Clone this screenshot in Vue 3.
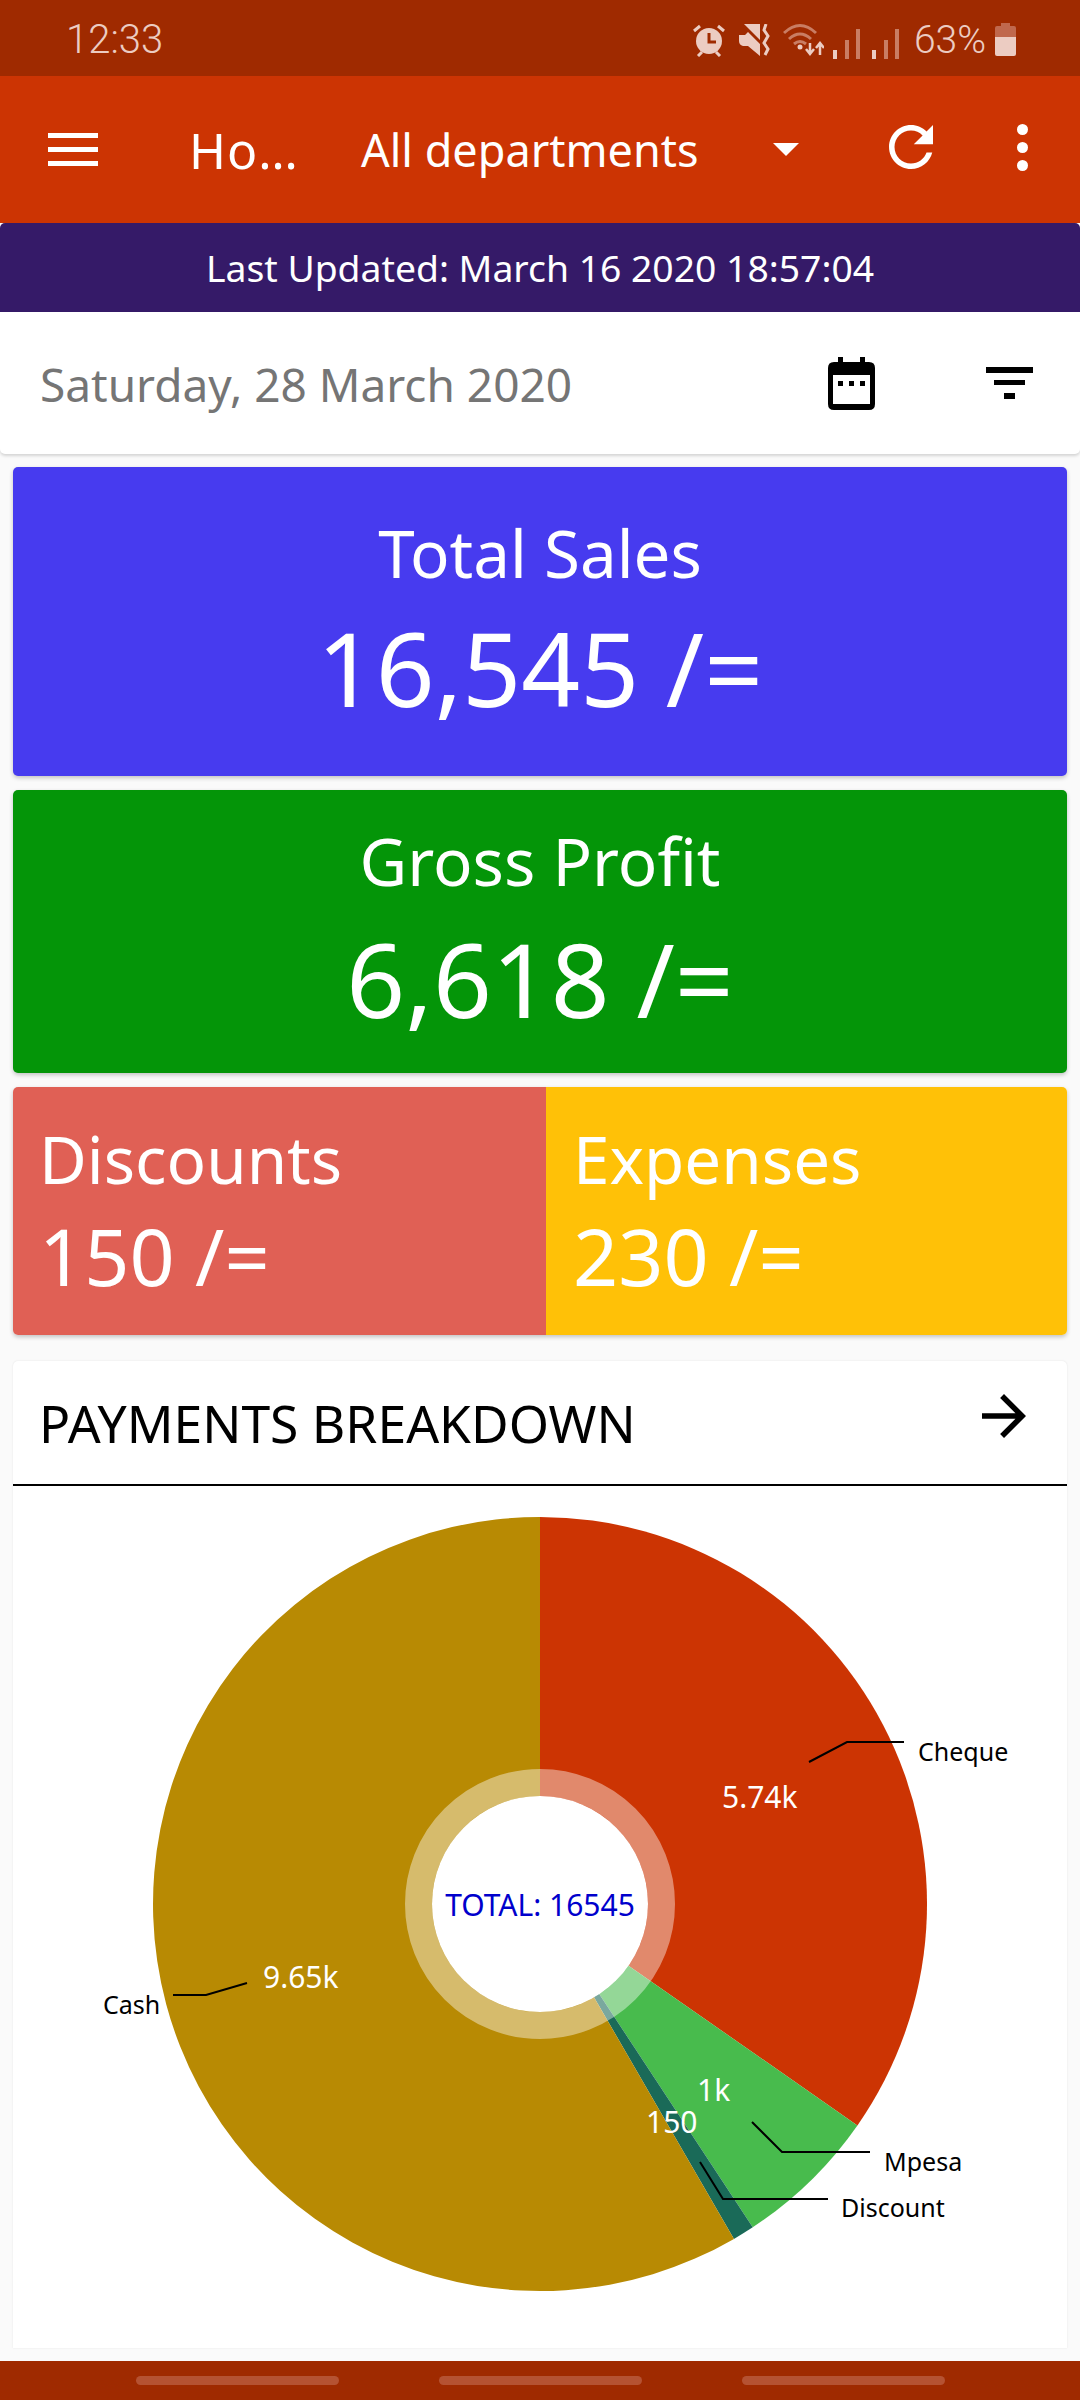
<script setup>
import { computed } from 'vue'

const cx = 540
const cy = 1904
const total = 16545

const pagos = [
  { nombre: 'Cheque', valor: 5740, color: '#cc3403' },
  { nombre: 'Mpesa', valor: 1000, color: '#48bb4d' },
  { nombre: 'Discount', valor: 150, color: '#1a6a58' },
  { nombre: 'Cash', valor: 9655, color: '#b88a03' }
]

const punto = (r, ang) => {
  const a = (ang * Math.PI) / 180
  return `${(cx + r * Math.sin(a)).toFixed(2)} ${(cy - r * Math.cos(a)).toFixed(2)}`
}

const arco = (r, ini, fin) => {
  const grande = fin - ini > 180 ? 1 : 0
  return `M${cx} ${cy}L${punto(r, ini)}A${r} ${r} 0 ${grande} 1 ${punto(r, fin)}Z`
}

const rebanadas = computed(() => {
  let ini = 0
  return pagos.map((p) => {
    const fin = ini + (p.valor / total) * 360
    const d = arco(387, ini, fin)
    ini = fin
    return { ...p, d }
  })
})

const lineas = [
  '809,1762 847,1742 904,1742',
  '752,2122 782,2152 870,2152',
  '700,2162 723,2199 828,2199',
  '173,1995 206,1995 247,1983'
]

const etiquetas = [
  { t: 'Cheque', x: 918, y: 1761 },
  { t: 'Mpesa', x: 884, y: 2171 },
  { t: 'Discount', x: 841, y: 2217 },
  { t: 'Cash', x: 103, y: 2014 }
]

const valores = [
  { t: '5.74k', x: 722, y: 1808 },
  { t: '1k', x: 697, y: 2101 },
  { t: '150', x: 646, y: 2133 },
  { t: '9.65k', x: 263, y: 1988 }
]
</script>

<template>
  <div class="pagina">
    <div class="status">
      <span class="hora">12:33</span>
      <div class="status-iconos">
        <svg width="36" height="34" viewBox="0 0 36 34" class="ic-status">
          <circle cx="18" cy="18" r="13" fill="#ecccc2" />
          <path d="M18 10v9h7" fill="none" stroke="#9f2a00" stroke-width="3" />
          <path d="M3 8l6-5M33 8l-6-5M7 33l4-4M29 33l-4-4" stroke="#ecccc2" stroke-width="3" />
        </svg>
        <svg width="32" height="32" viewBox="0 0 32 32" class="ic-status">
          <path d="M0 11h6l3-3 12 12v12L9 22H4q-4-1-4-5zM5 0l16 16V0z" fill="#ecccc2" />
          <path d="M27 0l-2 6 4 6-4 7 4 6-3 6" fill="none" stroke="#ecccc2" stroke-width="3" />
        </svg>
        <svg width="41" height="34" viewBox="0 0 41 34" class="ic-wifi">
          <path d="M1 10q16-15 32 0M6 16q11-10 22 0M11 21q6-5 12 0" fill="none" stroke="#c97d63" stroke-width="3" />
          <circle cx="17" cy="24" r="2.5" fill="#ecccc2" />
          <path d="M27 20v10M23 26l4 5 4-5M37 32V20M33 25l4-5 4 5" fill="none" stroke="#ecccc2" stroke-width="2.5" />
        </svg>
        <svg v-for="n in 2" :key="n" width="28" height="30" viewBox="0 0 28 30" class="ic-senal">
          <rect x="0" y="21" width="4" height="9" fill="#ecccc2" />
          <rect x="12" y="11" width="4" height="19" fill="#c97d63" />
          <rect x="23" y="0" width="4" height="30" fill="#c97d63" />
        </svg>
        <span class="porcentaje">63%</span>
        <svg width="21" height="33" viewBox="0 0 21 33" class="ic-bateria">
          <path d="M6 0h9v3h4q2 0 2 2v9H0V5q0-2 2-2h4z" fill="#c0684d" />
          <path d="M0 14h21v17q0 2-2 2H2q-2 0-2-2z" fill="#ecccc2" />
        </svg>
      </div>
    </div>

    <header class="barra">
      <div class="menu"><span></span><span></span><span></span></div>
      <div class="titulo">Ho…</div>
      <div class="departamento">All departments</div>
      <div class="triangulo"></div>
      <svg class="recargar" width="66" height="66" viewBox="0 0 24 24" fill="#fff">
        <path d="M17.65 6.35C16.2 4.9 14.21 4 12 4c-4.42 0-7.99 3.58-7.99 8s3.57 8 7.99 8c3.73 0 6.84-2.55 7.73-6h-2.08c-.82 2.33-3.04 4-5.65 4-3.31 0-6-2.69-6-6s2.69-6 6-6c1.66 0 3.14.69 4.22 1.78L13 11h7V4l-2.35 2.35z" />
      </svg>
      <div class="puntos"><span></span><span></span><span></span></div>
    </header>

    <div class="actualizado">Last Updated: March 16 2020 18:57:04</div>

    <div class="fecha">
      <span class="fecha-texto">Saturday, 28 March 2020</span>
      <svg class="calendario" width="47" height="53" viewBox="0 0 47 53">
        <path d="M10 0h5v5h17V0h5v5h4q6 0 6 6v36q0 6-6 6H6q-6 0-6-6V11q0-6 6-6h4zM5 18v29h37V18z" fill="#000" fill-rule="evenodd" />
        <rect x="10" y="24" width="5" height="5" fill="#000" />
        <rect x="21" y="24" width="5" height="5" fill="#000" />
        <rect x="32" y="24" width="5" height="5" fill="#000" />
      </svg>
      <svg class="filtro" width="47" height="32" viewBox="0 0 47 32">
        <rect x="0" y="0" width="47" height="6" />
        <rect x="8" y="13" width="31" height="5" />
        <rect x="18" y="26" width="11" height="6" />
      </svg>
    </div>

    <main class="contenido">
      <div class="tarjeta ventas">
        <div class="tarjeta-titulo">Total Sales</div>
        <div class="tarjeta-valor">16,545 /=</div>
      </div>

      <div class="tarjeta ganancia">
        <div class="tarjeta-titulo">Gross Profit</div>
        <div class="tarjeta-valor">6,618 /=</div>
      </div>

      <div class="doble">
        <div class="mitad descuentos">
          <div class="mitad-titulo">Discounts</div>
          <div class="mitad-valor">150 /=</div>
        </div>
        <div class="mitad gastos">
          <div class="mitad-titulo">Expenses</div>
          <div class="mitad-valor">230 /=</div>
        </div>
      </div>

      <section class="panel">
        <div class="panel-cabecera">
          <h2>PAYMENTS BREAKDOWN</h2>
          <svg width="66" height="66" viewBox="0 0 24 24">
            <path d="M12 4l-1.41 1.41L16.17 11H4v2h12.17l-5.58 5.59L12 20l8-8z" />
          </svg>
        </div>
        <svg class="grafico" width="1053" height="862" viewBox="13 1486 1053 862">
          <path v-for="r in rebanadas" :key="r.nombre" :d="r.d" :fill="r.color" />
          <circle :cx="cx" :cy="cy" r="121.5" fill="none" stroke="#fff" stroke-opacity="0.42" stroke-width="27" />
          <circle :cx="cx" :cy="cy" r="108" fill="#fff" />
          <polyline v-for="l in lineas" :key="l" :points="l" fill="none" stroke="#000" stroke-width="2" />
          <text v-for="e in etiquetas" :key="e.t" :x="e.x" :y="e.y" class="etiqueta">{{ e.t }}</text>
          <text v-for="v in valores" :key="v.t" :x="v.x" :y="v.y" class="valor">{{ v.t }}</text>
          <text :x="cx" y="1916" text-anchor="middle" class="total">TOTAL: 16545</text>
        </svg>
      </section>
    </main>

    <div class="navegacion"><span></span><span></span><span></span></div>
  </div>
</template>

<style>
html,
body {
  margin: 0;
  background: #fafafa;
}
</style>

<style scoped>
* {
  box-sizing: border-box;
}

.pagina {
  width: 1080px;
  height: 2400px;
  display: flex;
  flex-direction: column;
  background: #fafafa;
  font-family: "Noto Sans", sans-serif;
  overflow: hidden;
}

.status {
  height: 76px;
  flex: none;
  background: #9f2a00;
  display: flex;
  align-items: center;
  justify-content: space-between;
  padding: 3px 64px 0 66px;
  color: #ecccc2;
}

.hora {
  font-family: Roboto, sans-serif;
  font-size: 40px;
  font-weight: 300;
}

.status-iconos {
  display: flex;
  align-items: center;
}

.ic-status {
  margin-right: 12px;
}

.ic-wifi {
  margin-right: 9px;
}

.ic-senal {
  margin-right: 11px;
  margin-top: 8px;
}

.porcentaje {
  font-family: Roboto, sans-serif;
  font-size: 39px;
  font-weight: 300;
  margin: 0 9px 0 3px;
}

.barra {
  height: 147px;
  flex: none;
  background: #cc3403;
  color: #fff;
  display: flex;
  align-items: center;
  position: relative;
}

.menu {
  margin-left: 48px;
  width: 50px;
  display: flex;
  flex-direction: column;
  gap: 9px;
}

.menu span {
  height: 5px;
  background: #fff;
}

.titulo {
  margin-left: 91px;
  width: 172px;
  font-size: 50px;
  letter-spacing: 1px;
}

.departamento {
  width: 412px;
  font-size: 45px;
}

.triangulo {
  width: 0;
  height: 0;
  border-left: 13px solid transparent;
  border-right: 13px solid transparent;
  border-top: 13px solid #fff;
}

.recargar {
  margin-left: 79px;
  margin-top: -5px;
}

.puntos {
  margin-left: 73px;
  display: flex;
  flex-direction: column;
  gap: 7px;
  margin-top: -5px;
}

.puntos span {
  width: 11px;
  height: 11px;
  border-radius: 50%;
  background: #fff;
}

.actualizado {
  height: 89px;
  flex: none;
  background: #351a68;
  color: #fff;
  font-size: 37.3px;
  display: flex;
  align-items: center;
  justify-content: center;
  border-radius: 5px 5px 0 0;
}

.fecha {
  height: 142px;
  flex: none;
  background: #fff;
  display: flex;
  align-items: center;
  padding-left: 40px;
  border-radius: 0 0 5px 5px;
  box-shadow: 0 2px 3px rgba(0, 0, 0, 0.15);
}

.fecha-texto {
  width: 788px;
  font-size: 46px;
  padding-top: 2px;
  color: #757575;
}

.filtro {
  margin-left: 111px;
}

.contenido {
  flex: 1;
  padding: 13px 13px 0 13px;
  display: flex;
  flex-direction: column;
  gap: 14px;
}

.tarjeta {
  border-radius: 5px;
  color: #fff;
  text-align: center;
  box-shadow: 0 2px 4px rgba(0, 0, 0, 0.22);
}

.ventas {
  height: 309px;
  background: #473bef;
  padding-top: 42px;
}

.ganancia {
  height: 283px;
  background: #049508;
  padding-top: 27px;
}

.tarjeta-titulo {
  font-size: 65.5px;
  line-height: 88px;
}

.tarjeta-valor {
  font-size: 103px;
  line-height: 134px;
}

.ventas .tarjeta-valor {
  padding-top: 3px;
}

.ganancia .tarjeta-valor {
  padding-top: 6px;
}

.doble {
  height: 248px;
  display: flex;
  border-radius: 5px;
  overflow: hidden;
  color: #fff;
  box-shadow: 0 2px 4px rgba(0, 0, 0, 0.22);
  flex: none;
}

.mitad {
  padding: 28px 0 0 26px;
}

.descuentos {
  width: 533px;
  background: #e06055;
}

.gastos {
  flex: 1;
  padding-left: 27px;
  background: #ffc107;
}

.mitad-titulo {
  font-size: 65.5px;
  line-height: 88px;
}

.mitad-valor {
  font-size: 79px;
  line-height: 106px;
}

.panel {
  margin-top: 12px;
  height: 987px;
  background: #fff;
  border-radius: 5px 5px 0 0;
  box-shadow: 0 0 2px rgba(0, 0, 0, 0.1);
}

.panel-cabecera {
  height: 125px;
  border-bottom: 2px solid #000;
  display: flex;
  align-items: center;
  justify-content: space-between;
  padding: 0 30px 0 26px;
}

.panel-cabecera h2 {
  margin: 0;
  font-size: 51.6px;
  font-weight: 400;
  color: #000;
}

.panel-cabecera svg {
  margin-top: -14px;
}

.grafico {
  display: block;
}

.etiqueta {
  font-size: 25px;
  fill: #000;
}

.valor {
  font-size: 30px;
  fill: #fff;
}

.total {
  font-size: 30px;
  fill: #0000cc;
}

.navegacion {
  height: 39px;
  flex: none;
  background: #9f2a00;
  display: flex;
  justify-content: center;
  gap: 100px;
  padding-top: 15px;
}

.navegacion span {
  width: 203px;
  height: 9px;
  border-radius: 5px;
  background: #b55232;
}
</style>
